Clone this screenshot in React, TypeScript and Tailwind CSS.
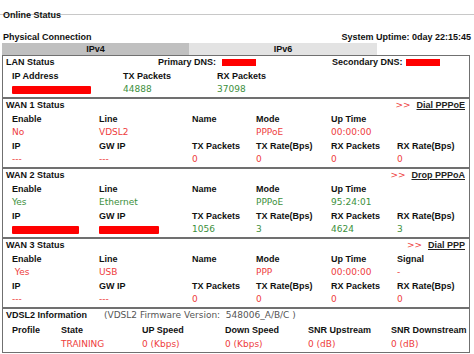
import React from 'react'

const RED = 'text-[#ee3d3d]'
const GREEN = 'text-[#3c8f3c]'

type Cell = { text: string; color?: string; bar?: number }

function Row({ cells, bold, cols, h = 'h-[13.6px]' }: { cells: Cell[]; bold?: boolean; cols: string; h?: string }) {
    return (
        <div className={`grid ${cols} ${h} items-center pl-[9px]`}>
            {cells.map((c, i) => (
                <div key={i} className={bold ? "font-['Liberation_Sans'] font-bold text-[9px] text-[#111] leading-none whitespace-nowrap" : `font-['DejaVu_Sans'] text-[9px] leading-none whitespace-nowrap ${c.color || ''}`}>
                    {c.bar ? <div className="h-[8px] bg-[#ff0000] rounded-[1px]" style={{ width: c.bar }} /> : c.text}
                </div>
            ))}
        </div>
    )
}

function SectionTitle({ title, action, actionText }: { title: string; action?: boolean; actionText?: string }) {
    return (
        <div className="flex h-[13.6px] items-center justify-between pl-[3px] pr-[4px]">
            <span className="font-['Liberation_Sans'] font-bold text-[9px] leading-none text-[#111]">{title}</span>
            {action && (
                <span className="flex items-center leading-none">
                    <span className="font-['DejaVu_Sans'] text-[9px] text-[#ee3d3d] mr-[6px]">&gt;&gt;</span>
                    <span className="font-['Liberation_Sans'] font-bold text-[9px] text-[#222] underline">{actionText}</span>
                </span>
            )}
        </div>
    )
}

const WAN_COLS = 'grid-cols-[87px_93px_64px_75px_66px_1fr]'
const VDSL_COLS = 'grid-cols-[49px_81px_83px_83px_83px_1fr]'

function WanBox({ n, action, yesNo, line, mode, up, signal, ok, ip }: {
    n: number; action: string; yesNo: string; line: string; mode: string; up: string; signal?: string; ok: boolean; ip: Cell[]
}) {
    const col = ok ? GREEN : RED
    return (
        <div className="border border-[#707070]">
            <SectionTitle title={`WAN ${n} Status`} action actionText={action} />
            <Row bold cols={WAN_COLS} cells={[{ text: 'Enable' }, { text: 'Line' }, { text: 'Name' }, { text: 'Mode' }, { text: 'Up Time' }, { text: signal !== undefined ? 'Signal' : '' }]} />
            <Row cols={WAN_COLS} cells={[{ text: yesNo, color: col }, { text: line, color: col }, { text: '' }, { text: mode, color: col }, { text: up, color: col }, { text: signal ?? '', color: col }]} />
            <Row bold cols={WAN_COLS} cells={[{ text: 'IP' }, { text: 'GW IP' }, { text: 'TX Packets' }, { text: 'TX Rate(Bps)' }, { text: 'RX Packets' }, { text: 'RX Rate(Bps)' }]} />
            <Row cols={WAN_COLS} cells={ip} />
        </div>
    )
}

const zeros = (c: string): Cell[] => [{ text: '---', color: c }, { text: '---', color: c }, { text: '0', color: c }, { text: '0', color: c }, { text: '0', color: c }, { text: '0', color: c }]

export default function App() {
    return (
        <div className="w-[474px] h-[354px] bg-white overflow-hidden font-['Liberation_Sans']">
            <div className="h-[15px] border-b border-[#c8c8c8] px-[3px] pt-[1px]">
                <span className="font-bold text-[9px] leading-none text-[#111]">Online Status</span>
            </div>
            <div className="flex justify-between items-end h-[28px] px-[3px] pb-[1px]">
                <span className="font-bold text-[9px] leading-none text-[#111]">Physical Connection</span>
                <span className="font-bold text-[9px] leading-none text-[#111]">System Uptime: 0day 22:15:45</span>
            </div>
            <div className="flex h-[12px] ml-[2px]">
                <div className="w-[187px] bg-[#c0c0c0] flex items-center justify-center font-bold text-[9px] leading-none text-[#111]">IPv4</div>
                <div className="w-[188px] bg-[#e3e3e3] flex items-center justify-center font-bold text-[9px] leading-none text-[#111]">IPv6</div>
            </div>
            <div className="mx-[2px] w-[468px]">
                <div className="border border-[#707070]">
                    <div className="flex h-[13.6px] items-center pl-[3px] font-bold text-[9px] leading-none text-[#111]">
                        <span className="w-[152px]">LAN Status</span>
                        <span className="w-[61px]">Primary DNS:</span>
                        <span className="ml-[3px] w-[34px] h-[7px] bg-[#ff0000]" />
                        <span className="w-[76px]" />
                        <span className="w-[71px]">Secondary DNS:</span>
                        <span className="ml-[3px] w-[34px] h-[7px] bg-[#ff0000]" />
                    </div>
                    <Row bold cols="grid-cols-[111px_94px_1fr]" cells={[{ text: 'IP Address' }, { text: 'TX Packets' }, { text: 'RX Packets' }]} />
                    <Row cols="grid-cols-[111px_94px_1fr]" cells={[{ text: '', bar: 79 }, { text: '44888', color: GREEN }, { text: '37098', color: GREEN }]} />
                </div>
                <WanBox n={1} action="Dial PPPoE" yesNo="No" line="VDSL2" mode="PPPoE" up="00:00:00" ok={false} ip={zeros(RED)} />
                <WanBox n={2} action="Drop PPPoA" yesNo="Yes" line="Ethernet" mode="PPPoE" up="95:24:01" ok
                    ip={[{ text: '', bar: 67 }, { text: '', bar: 60 }, { text: '1056', color: GREEN }, { text: '3', color: GREEN }, { text: '4624', color: GREEN }, { text: '3', color: GREEN }]} />
                <WanBox n={3} action="Dial PPP" yesNo={'\u00a0Yes'} line="USB" mode="PPP" up="00:00:00" signal="-" ok={false} ip={zeros(RED)} />
                <div className="border border-[#707070]">
                    <div className="flex h-[14.3px] items-center pl-[3px] leading-none">
                        <span className="w-[98px] font-bold text-[9px] text-[#111]">VDSL2 Information</span>
                        <span className="font-['DejaVu_Sans'] text-[9px] text-[#555] whitespace-pre">(VDSL2 Firmware Version:  548006_A/B/C )</span>
                    </div>
                    <Row bold h="h-[14.3px]" cols={VDSL_COLS} cells={[{ text: 'Profile' }, { text: 'State' }, { text: 'UP Speed' }, { text: 'Down Speed' }, { text: 'SNR Upstream' }, { text: 'SNR Downstream' }]} />
                    <Row h="h-[14.3px]" cols={VDSL_COLS} cells={[{ text: '' }, { text: 'TRAINING', color: RED }, { text: '0 (Kbps)', color: RED }, { text: '0 (Kbps)', color: RED }, { text: '0 (dB)', color: RED }, { text: '0 (dB)', color: RED }]} />
                </div>
            </div>
        </div>
    )
}
